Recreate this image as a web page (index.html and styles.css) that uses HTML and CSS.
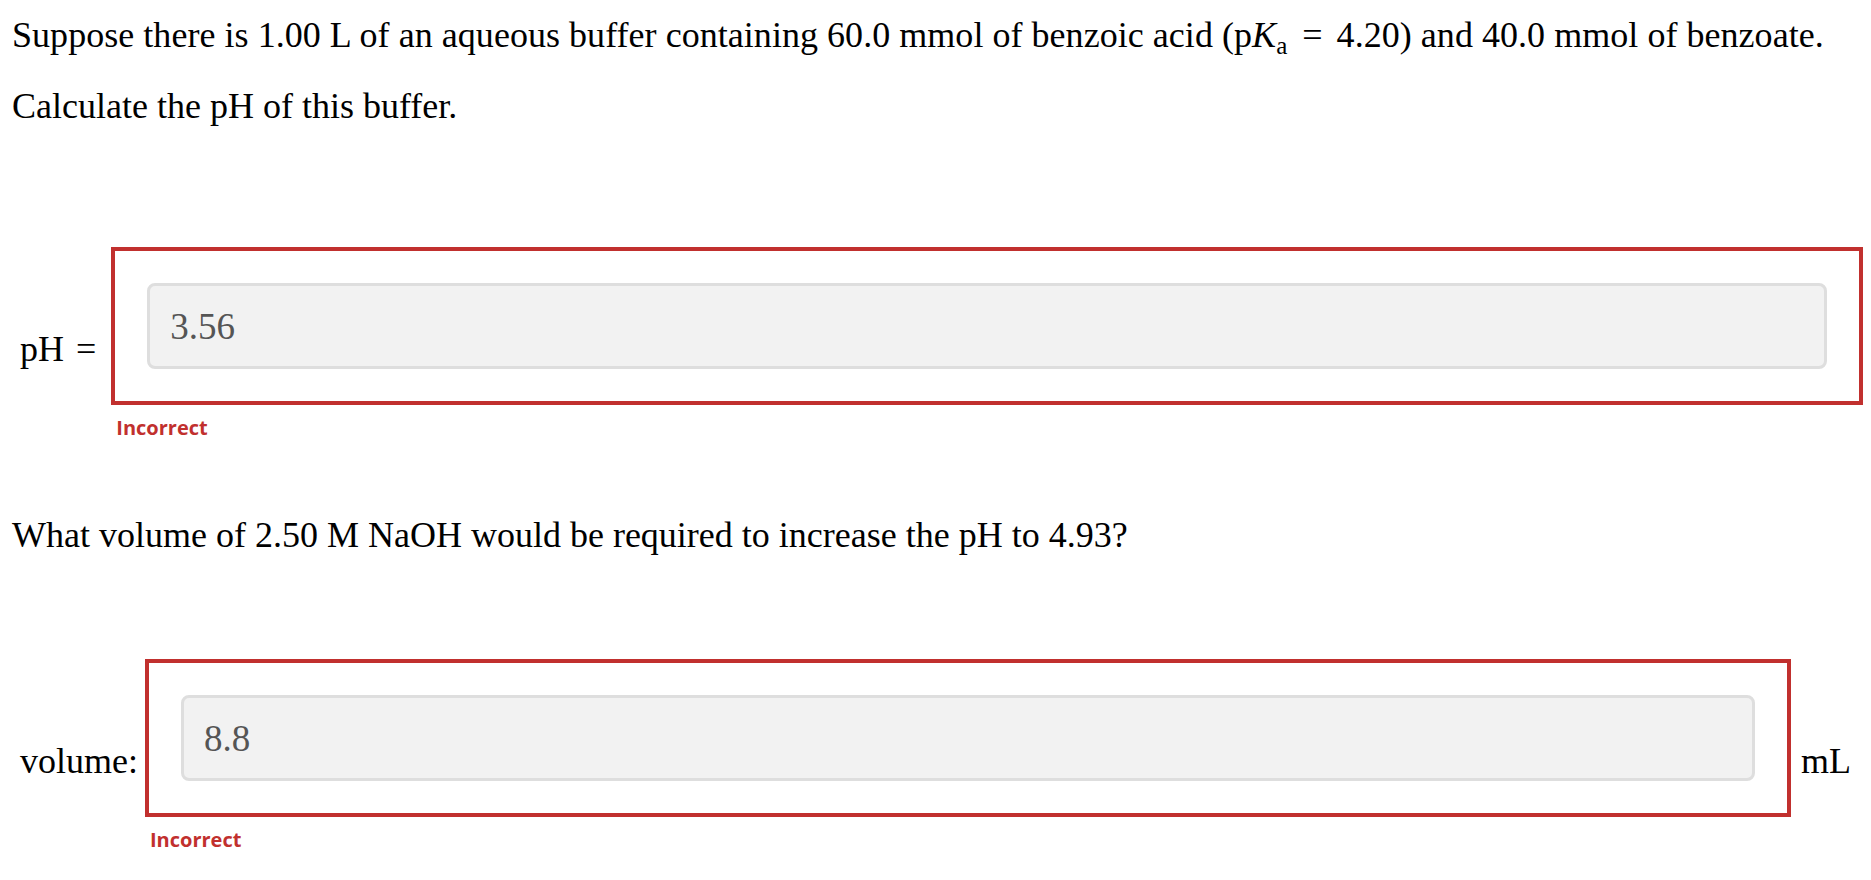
FILE: index.html
```html
<!DOCTYPE html>
<html lang="en">
<head>
<meta charset="utf-8">
<title>Buffer question</title>
<link rel="stylesheet" href="styles.css">
</head>
<body>
<div class="page">
  <p class="q q-first">Suppose there is 1.00 L of an aqueous buffer containing 60.0 mmol of benzoic acid (p<i class="var">K</i><sub class="sub">a</sub><span class="eq">=</span>4.20) and 40.0 mmol of benzoate.</p>
  <p class="q q-second">Calculate the pH of this buffer.</p>

  <div class="row row-ph">
    <div class="label">pH<span class="label-eq">=</span></div>
    <div class="answer">
      <div class="box">
        <input class="field" type="text" value="3.56" readonly>
      </div>
      <div class="status">Incorrect</div>
    </div>
  </div>

  <p class="q q-third">What volume of 2.50 M NaOH would be required to increase the pH to 4.93?</p>

  <div class="row row-vol">
    <div class="label">volume:</div>
    <div class="answer">
      <div class="box">
        <input class="field" type="text" value="8.8" readonly>
      </div>
      <div class="status">Incorrect</div>
    </div>
    <div class="unit">mL</div>
  </div>
</div>
</body>
</html>
```

FILE: styles.css
```css
html, body {
  margin: 0;
  padding: 0;
  background: #ffffff;
}

body {
  font-family: "Liberation Serif", "Times New Roman", serif;
  font-size: 36px;
  color: #000000;
}

.page {
  padding: 0 8px 0 12px;
}

.q {
  margin: 0;
  line-height: 40px;
  white-space: nowrap;
}

.q-first {
  padding-top: 15px;
  letter-spacing: 0.04px;
}

.q-second {
  margin-top: 31px;
}

.q-third {
  margin-top: 73px;
}

.var {
  font-style: italic;
}

.sub {
  font-size: 25px;
  line-height: 0;
  vertical-align: -7px;
}

.eq {
  margin: 0 14px 0 15px;
}

.row {
  display: flex;
  align-items: center;
}

.row-ph {
  margin-top: 121px;
}

.row-vol {
  margin-top: 104px;
}

.label {
  padding: 8px 7px 0 8px;
  line-height: 40px;
  white-space: nowrap;
}

.label-eq {
  margin: 0 8px 0 12px;
}

.answer {
  flex: 1;
  display: flex;
  flex-direction: column;
}

.box {
  border: 4px solid #c1302e;
  padding: 32px;
}

.field {
  display: block;
  box-sizing: border-box;
  width: 100%;
  height: 86px;
  margin: 0;
  padding: 0 20px;
  border: 3px solid #dedede;
  border-radius: 8px;
  background: #f2f2f2;
  color: #555555;
  font-family: "Liberation Serif", "Times New Roman", serif;
  font-size: 37px;
  outline: none;
}

.status {
  margin-top: 9px;
  padding-left: 5px;
  font-family: "Open Sans", "Noto Sans", sans-serif;
  font-weight: 700;
  font-size: 20px;
  line-height: 28px;
  color: #c1302e;
}

.unit {
  padding: 8px 12px 0 10px;
  line-height: 40px;
}
```
